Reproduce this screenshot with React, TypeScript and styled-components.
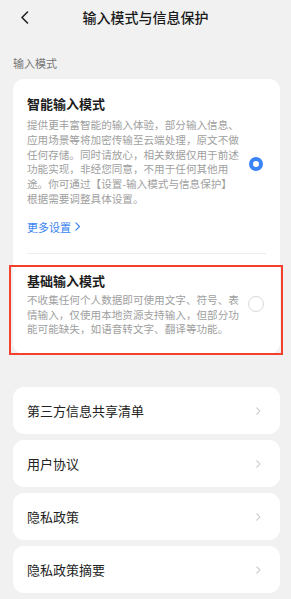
import React from 'react';
import styled, { createGlobalStyle } from 'styled-components';

const GlobalStyle = createGlobalStyle`
  html, body {
    margin: 0;
    padding: 0;
    background: #f1f1f1;
    font-family: "Noto Sans CJK SC", "Noto Sans", sans-serif;
  }
`;

const Page = styled.div`
  width: 291px;
  min-height: 599px;
  background: #f1f1f1;
  display: flex;
  flex-direction: column;
`;

const Header = styled.div`
  height: 34px;
  display: flex;
  align-items: center;
  justify-content: center;
  position: relative;
  font-size: 14px;
  font-weight: 500;
  color: #1a1a1a;
`;

const Back = styled.svg`
  position: absolute;
  left: 20px;
  top: 11px;
`;

const SectionLabel = styled.div`
  margin-top: 21px;
  padding-left: 13px;
  font-size: 11px;
  line-height: 16px;
  color: #777;
`;

const Card = styled.div`
  margin: 8px 11px 0 13px;
  background: #fff;
  border-radius: 11px;
`;

const Option = styled.div<{ $marked?: boolean }>`
  position: relative;
  display: flex;
  align-items: center;
  padding: ${(p) => (p.$marked ? '18px 16px 17px 14px' : '16px 16px 19px 14px')};

  ${(p) =>
    p.$marked &&
    `
    &::after {
      content: '';
      position: absolute;
      left: -4px;
      right: -3px;
      top: 11px;
      bottom: -1px;
      border: 2px solid #f2412f;
      pointer-events: none;
    }
  `}
`;

const OptionBody = styled.div`
  flex: 1;
`;

const OptionTitle = styled.div`
  font-size: 13px;
  line-height: 18px;
  font-weight: 600;
  color: #1c1c1c;
`;

const OptionDesc = styled.div<{ $gap: number }>`
  margin-top: ${(p) => p.$gap}px;
  font-size: 10.6px;
  line-height: 14.8px;
  color: #a0a0a0;
  white-space: nowrap;
`;

const MoreLink = styled.div`
  margin-top: 13px;
  display: flex;
  align-items: center;
  gap: 4px;
  font-size: 11px;
  line-height: 14px;
  color: #3a84f2;
`;

const Radio = styled.div<{ $on?: boolean }>`
  flex-shrink: 0;
  box-sizing: border-box;
  width: ${(p) => (p.$on ? '14px' : '16px')};
  height: ${(p) => (p.$on ? '14px' : '16px')};
  margin-right: ${(p) => (p.$on ? '1px' : '0')};
  border-radius: 50%;
  border: ${(p) => (p.$on ? '4px solid #3a84f6' : '1.2px solid #d9d9d9')};
  background: #fff;
`;

const Divider = styled.div`
  height: 1px;
  background: #ededed;
  margin: 0 14px;
`;

const List = styled.div`
  margin: 33px 11px 0 13px;
  display: flex;
  flex-direction: column;
  gap: 6px;
`;

const Row = styled.div`
  height: 47px;
  background: #fff;
  border-radius: 11px;
  display: flex;
  align-items: center;
  justify-content: space-between;
  padding: 0 19px 0 14px;
  font-size: 13px;
  color: #222;
`;

const Chevron = ({ color, size = 8 }: { color: string; size?: number }) => (
  <svg width={size * 0.6} height={size} viewBox="0 0 6 10" fill="none">
    <path d="M1 1l4 4-4 4" stroke={color} strokeWidth="1.3" strokeLinecap="round" strokeLinejoin="round" />
  </svg>
);

const lines = (arr: string[]) =>
  arr.map((l, i) => (
    <React.Fragment key={i}>
      {l}
      {i < arr.length - 1 && <br />}
    </React.Fragment>
  ));

const items = ['第三方信息共享清单', '用户协议', '隐私政策', '隐私政策摘要'];

export default function App() {
  return (
    <Page>
      <GlobalStyle />
      <Header>
        <Back width="9" height="13" viewBox="0 0 9 13" fill="none">
          <path d="M7.5 1L2 6.5 7.5 12" stroke="#222" strokeWidth="1.6" strokeLinecap="round" strokeLinejoin="round" />
        </Back>
        输入模式与信息保护
      </Header>
      <SectionLabel>输入模式</SectionLabel>
      <Card>
        <Option>
          <OptionBody>
            <OptionTitle>智能输入模式</OptionTitle>
            <OptionDesc $gap={5}>
              {lines([
                '提供更丰富智能的输入体验，部分输入信息、',
                '应用场景等将加密传输至云端处理，原文不做',
                '任何存储。同时请放心，相关数据仅用于前述',
                '功能实现，非经您同意，不用于任何其他用',
                '途。你可通过【设置-输入模式与信息保护】',
                '根据需要调整具体设置。',
              ])}
            </OptionDesc>
            <MoreLink>
              更多设置
              <Chevron color="#3a84f2" size={9} />
            </MoreLink>
          </OptionBody>
          <Radio $on />
        </Option>
        <Divider />
        <Option $marked>
          <OptionBody>
            <OptionTitle>基础输入模式</OptionTitle>
            <OptionDesc $gap={3}>
              {lines([
                '不收集任何个人数据即可使用文字、符号、表',
                '情输入，仅使用本地资源支持输入，但部分功',
                '能可能缺失，如语音转文字、翻译等功能。',
              ])}
            </OptionDesc>
          </OptionBody>
          <Radio />
        </Option>
      </Card>
      <List>
        {items.map((t) => (
          <Row key={t}>
            {t}
            <Chevron color="#c4c4c4" size={8} />
          </Row>
        ))}
      </List>
    </Page>
  );
}
